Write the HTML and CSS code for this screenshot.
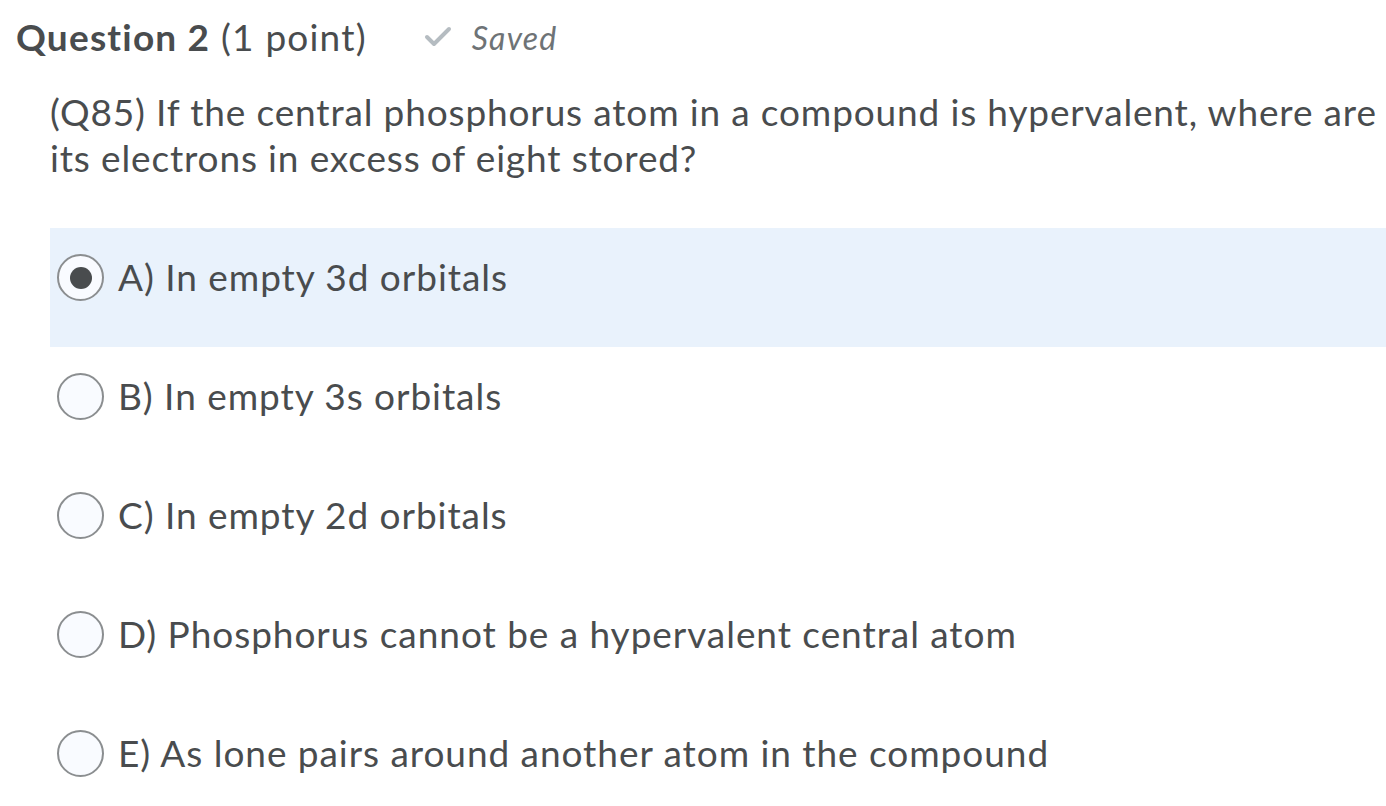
FILE: index.html
```html
<!DOCTYPE html>
<html>
<head>
<meta charset="utf-8">
<link rel="stylesheet" href="styles.css">
</head>
<body>
<div class="page">
  <div class="header">
    <h2 class="title"><span class="qnum">Question 2</span> <span class="pts">(1 point)</span></h2>
    <div class="saved">
      <svg class="check" width="30" height="24" viewBox="0 0 30 24"><path d="M4 12 L11 19 L26 4" fill="none" stroke="#b5bcc1" stroke-width="4" stroke-linecap="round" stroke-linejoin="round"/></svg>
      <span class="saved-text">Saved</span>
    </div>
  </div>
  <div class="body">
    <p class="question">(Q85) If the central phosphorus atom in a compound is hypervalent, where are its electrons in excess of eight stored?</p>
    <div class="options">
      <label class="option selected"><span class="radio"><span class="dot"></span></span><span class="otext">A) In empty 3d orbitals</span></label>
      <label class="option"><span class="radio"></span><span class="otext">B) In empty 3s orbitals</span></label>
      <label class="option"><span class="radio"></span><span class="otext">C) In empty 2d orbitals</span></label>
      <label class="option"><span class="radio"></span><span class="otext">D) Phosphorus cannot be a hypervalent central atom</span></label>
      <label class="option"><span class="radio"></span><span class="otext">E) As lone pairs around another atom in the compound</span></label>
    </div>
  </div>
</div>
</body>
</html>
```
FILE: styles.css
```css
html, body {
  margin: 0;
  padding: 0;
  background: #ffffff;
}
body {
  font-family: Lato, "Open Sans", sans-serif;
  color: #494c4e;
  overflow: hidden;
}
.page {
  padding: 13px 0 0 16px;
}
.header {
  display: flex;
  align-items: center;
  height: 48px;
}
.title {
  margin: 0;
  font-size: 37px;
  font-weight: 400;
  line-height: 48px;
  letter-spacing: 1.2px;
  white-space: nowrap;
}
.qnum {
  font-weight: 700;
}
.saved {
  display: flex;
  align-items: center;
  margin-left: 56px;
  gap: 19px;
}
.check {
  display: block;
}
.saved-text {
  font-style: italic;
  font-size: 32px;
  letter-spacing: 1.2px;
  color: #6e7376;
}
.body {
  padding-left: 34px;
}
.question {
  margin: 28px 0 0 0;
  font-size: 37px;
  line-height: 46px;
  letter-spacing: 0.85px;
}
.options {
  margin-top: 47px;
  display: flex;
  flex-direction: column;
}
.option {
  display: flex;
  align-items: flex-start;
  height: 119px;
  box-sizing: border-box;
  padding: 26px 0 0 7px;
  gap: 14px;
}
.option.selected {
  background: #e9f2fc;
}
.radio {
  width: 47px;
  height: 47px;
  box-sizing: border-box;
  border: 2px solid #8b8e90;
  border-radius: 50%;
  background: #f9fbff;
  display: flex;
  align-items: center;
  justify-content: center;
  flex: none;
}
.dot {
  width: 22px;
  height: 22px;
  border-radius: 50%;
  background: #494c4e;
}
.otext {
  font-size: 37px;
  line-height: 48px;
  letter-spacing: 0.95px;
  margin-top: -1px;
  white-space: nowrap;
}
```
